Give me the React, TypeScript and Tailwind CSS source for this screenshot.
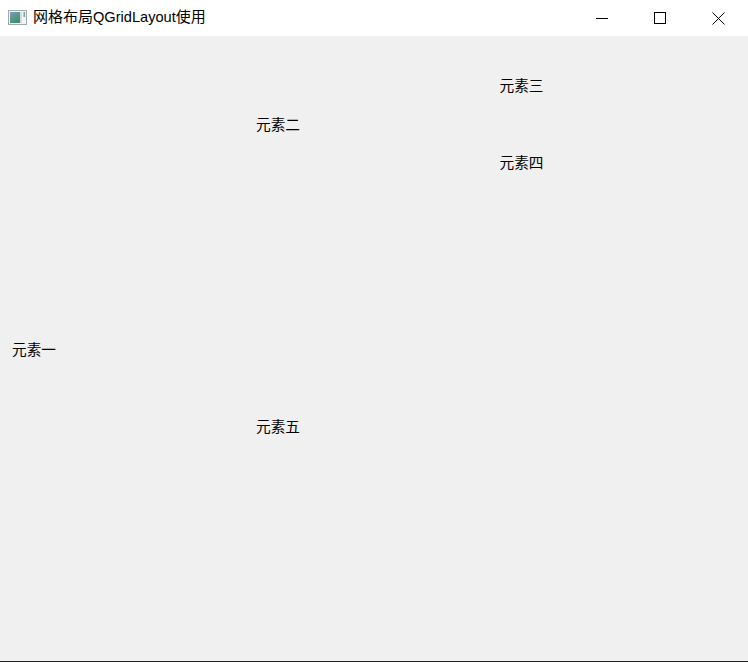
const fuente = "font-['Liberation_Sans','Noto_Sans_CJK_SC',sans-serif]";

function Etiqueta({ texto }: { texto: string }) {
  return <div className="flex items-center text-[14.67px] leading-none text-black">{texto}</div>;
}

function IconoVentana() {
  return (
    <svg width="20" height="16" viewBox="0 0 20 16" className="shrink-0">
      <defs>
        <linearGradient id="panel" x1="0" y1="0" x2="0.6" y2="1">
          <stop offset="0" stopColor="#7d9db5" />
          <stop offset="1" stopColor="#3f9170" />
        </linearGradient>
      </defs>
      <rect x="0.5" y="0.5" width="18" height="14" fill="#f3f5f5" stroke="#a3a9ae" />
      <rect x="2" y="2" width="10" height="11" fill="url(#panel)" />
      <rect x="12" y="2" width="2" height="11" fill="#d5dcdc" />
      <rect x="15.5" y="2" width="1.5" height="5" fill="#6fa89a" />
    </svg>
  );
}

export default function App() {
  return (
    <div className={`flex h-[662px] w-[748px] flex-col overflow-hidden bg-[#f0f0f0] ${fuente}`}>
      <div className="flex h-9 items-center bg-white">
        <div className="flex flex-1 items-center gap-[5px] pl-[8px]">
          <IconoVentana />
          <span className="pb-[2px] text-[15px] leading-none text-black">
            网格布局<span className="text-[14.6px]">QGridLayout</span>使用
          </span>
        </div>
        <div className="flex">
          <div className="grid h-9 w-[58px] place-items-center">
            <svg width="12" height="12" viewBox="0 0 12 12">
              <path d="M0 6.5H12" stroke="#000" fill="none" />
            </svg>
          </div>
          <div className="grid h-9 w-[58px] place-items-center">
            <svg width="12" height="12" viewBox="0 0 12 12">
              <rect x="0.5" y="0.5" width="11" height="11" stroke="#000" fill="none" />
            </svg>
          </div>
          <div className="grid h-9 w-[59px] place-items-center">
            <svg width="13" height="13" viewBox="0 0 13 13">
              <path d="M0.5 0.5L12.5 12.5M12.5 0.5L0.5 12.5" stroke="#000" fill="none" />
            </svg>
          </div>
        </div>
      </div>
      <div className="grid flex-1 grid-cols-[244px_243.5px_1fr] grid-rows-[38px_40px_37px_149px_39px_38px_38.5px] pl-3 pt-[31px]">
        <div className="col-start-3 row-start-1 flex"><Etiqueta texto="元素三" /></div>
        <div className="col-start-2 row-start-2 flex"><Etiqueta texto="元素二" /></div>
        <div className="col-start-3 row-start-3 flex"><Etiqueta texto="元素四" /></div>
        <div className="col-start-1 row-start-5 flex"><Etiqueta texto="元素一" /></div>
        <div className="col-start-2 row-start-7 flex"><Etiqueta texto="元素五" /></div>
      </div>
      <div className="h-px bg-[#222222]" />
    </div>
  );
}
